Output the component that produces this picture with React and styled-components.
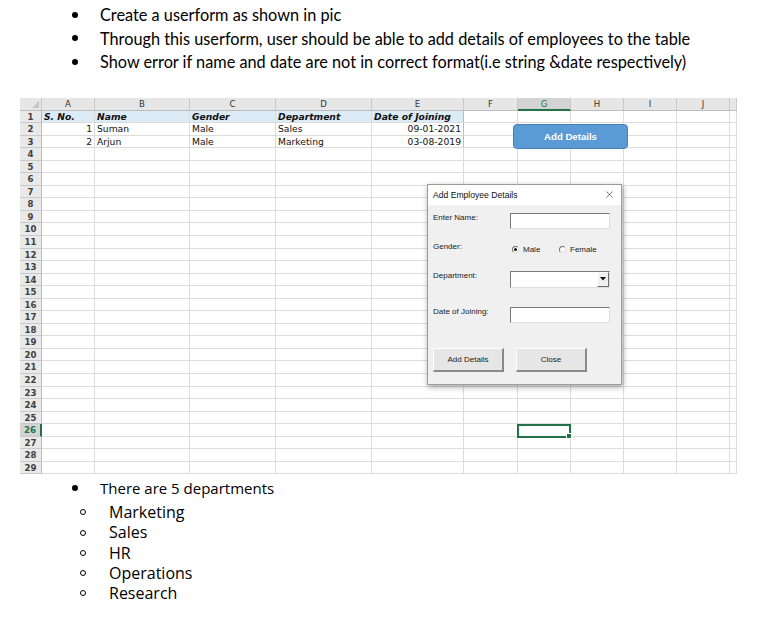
import React from 'react';
import styled, { createGlobalStyle } from 'styled-components';
import { X } from 'lucide-react';

const GlobalStyle = createGlobalStyle`
  html, body { margin: 0; padding: 0; background: #fff; }
  body { font-family: 'Lato', 'Liberation Sans', sans-serif; color: #000; }
`;

// column widths of the worksheet, first one is the row header
const COLS = [
  { id: '', w: 22 },
  { id: 'A', w: 53 },
  { id: 'B', w: 95 },
  { id: 'C', w: 86 },
  { id: 'D', w: 96 },
  { id: 'E', w: 92 },
  { id: 'F', w: 54 },
  { id: 'G', w: 53 },
  { id: 'H', w: 53 },
  { id: 'I', w: 53 },
  { id: 'J', w: 53 },
  { id: '', w: 7 },
];

const DATA = {
  1: { A: 'S. No.', B: 'Name', C: 'Gender', D: 'Department', E: 'Date of Joining' },
  2: { A: '1', B: 'Suman', C: 'Male', D: 'Sales', E: '09-01-2021' },
  3: { A: '2', B: 'Arjun', C: 'Male', D: 'Marketing', E: '03-08-2019' },
};
const RIGHT = ['A', 'E'];
const ACTIVE_COL = 'G';
const ACTIVE_ROW = 26;
const ROW_COUNT = 29;

const tasks = [
  'Create a userform as shown in pic',
  'Through this userform, user should be able to add details of employees to the table',
  'Show error if name and date are not in correct format(i.e string &date respectively)',
];
const departments = ['Marketing', 'Sales', 'HR', 'Operations', 'Research'];

const Page = styled.div`
  width: 784px;
  height: 635px;
  overflow: hidden;
  padding-top: 3px;
  box-sizing: border-box;
`;

const List = styled.ul`
  list-style: none;
  margin: 0;
  padding: 0;
`;

const Item = styled.li`
  display: flex;
  align-items: center;
  padding-left: ${p => p.$indent}px;
  font-family: ${p => p.$font};
  font-size: ${p => p.$size}px;
  line-height: ${p => p.$lh}px;
`;

const Marker = styled.span`
  flex: none;
  width: ${p => p.$w}px;
  display: flex;
  align-items: center;
`;

const Dot = styled.span`
  width: 6px;
  height: 6px;
  border-radius: 50%;
  background: ${p => (p.$hollow ? 'transparent' : '#000')};
  border: ${p => (p.$hollow ? '1px solid #000' : 'none')};
  box-sizing: border-box;
`;

const Sheet = styled.div`
  position: relative;
  margin: 24px 0 0 20px;
  width: 717px;
  font-family: 'DejaVu Sans', Verdana, sans-serif;
  font-size: 9.2px;
  color: #111;
`;

const Grid = styled.div`
  display: grid;
  grid-template-columns: ${COLS.map(c => c.w + 'px').join(' ')};
  grid-template-rows: 13px;
  grid-auto-rows: 12.55px;
`;

const Corner = styled.div`
  position: relative;
  background: #e6e6e6;
  border-right: 1px solid #c6c6c6;
  border-bottom: 1px solid #bdbdbd;
  box-sizing: border-box;
  &::after {
    content: '';
    position: absolute;
    right: 2px;
    bottom: 2px;
    border-left: 7px solid transparent;
    border-bottom: 7px solid #c4c4c4;
  }
`;

const ColHead = styled.div`
  box-sizing: border-box;
  background: ${p => (p.$active ? '#d3d3d3' : '#e6e6e6')};
  border-right: 1px solid #c8c8c8;
  border-bottom: ${p => (p.$active ? '2px solid #217346' : '1px solid #bdbdbd')};
  text-align: center;
  line-height: 12px;
  font-size: 8.6px;
  color: ${p => (p.$active ? '#217346' : '#333')};
`;

const RowHead = styled.div`
  box-sizing: border-box;
  background: ${p => (p.$active ? '#d3d3d3' : '#e9e9e9')};
  border-right: ${p => (p.$active ? '2px solid #217346' : '1px solid #bdbdbd')};
  border-bottom: 1px solid #cacaca;
  text-align: center;
  line-height: 12px;
  font-size: 8.6px;
  font-weight: 600;
  color: ${p => (p.$active ? '#217346' : '#404040')};
`;

const Cell = styled.div`
  box-sizing: border-box;
  border-right: 1px solid ${p => (p.$edge ? '#bcbcbc' : '#dcdcdc')};
  border-bottom: 1px solid #dcdcdc;
  background: ${p => (p.$head ? '#ddebf7' : '#fff')};
  font-weight: ${p => (p.$head ? 700 : 400)};
  font-style: ${p => (p.$head ? 'italic' : 'normal')};
  text-align: ${p => p.$align};
  padding: 0 2px;
  line-height: 11.5px;
  white-space: nowrap;
  overflow: hidden;
`;

const MacroButton = styled.button`
  position: absolute;
  left: 493px;
  top: 26px;
  width: 115px;
  height: 25px;
  border: 1px solid #4a7fb5;
  border-radius: 4px;
  background: #5b9bd5;
  color: #fff;
  font-family: 'Liberation Sans', Arial, sans-serif;
  font-weight: 700;
  font-size: 9.6px;
  padding: 0;
`;

const Selection = styled.div`
  position: absolute;
  left: 497px;
  top: 326px;
  width: 54px;
  height: 14px;
  box-sizing: border-box;
  border: 2px solid #217346;
  &::after {
    content: '';
    position: absolute;
    right: -3px;
    bottom: -3px;
    width: 4px;
    height: 4px;
    background: #217346;
    border: 1px solid #fff;
  }
`;

const Dialog = styled.div`
  position: absolute;
  left: 407px;
  top: 86px;
  width: 195px;
  height: 201px;
  box-sizing: border-box;
  background: #f0f0f0;
  border: 1px solid #9c9c9c;
  box-shadow: 1px 2px 6px rgba(0, 0, 0, 0.35);
  font-family: 'Liberation Sans', Tahoma, sans-serif;
  font-size: 8px;
  color: #1a1a1a;
  display: flex;
  flex-direction: column;
`;

const TitleBar = styled.div`
  height: 20px;
  flex: none;
  background: #fff;
  display: flex;
  align-items: center;
  justify-content: space-between;
  padding: 0 6px 0 5px;
  font-size: 8.6px;
  color: #111;
`;

const Body = styled.div`
  padding: 0 0 0 5px;
`;

const FormRow = styled.div`
  display: flex;
  margin-top: ${p => p.$gap}px;
  height: ${p => p.$h}px;
`;

const Label = styled.div`
  width: 77px;
  flex: none;
  line-height: 10px;
`;

const TextBox = styled.div`
  width: 100px;
  height: 100%;
  box-sizing: border-box;
  background: #fff;
  border-top: 1px solid #7a7a7a;
  border-left: 1px solid #7a7a7a;
  border-right: 1px solid #dedede;
  border-bottom: 1px solid #dedede;
  display: flex;
  justify-content: flex-end;
`;

const DropButton = styled.div`
  width: 12px;
  height: 100%;
  box-sizing: border-box;
  background: #f0f0f0;
  border-top: 1px solid #fff;
  border-left: 1px solid #fff;
  border-right: 1px solid #6b6b6b;
  border-bottom: 1px solid #6b6b6b;
  display: flex;
  align-items: center;
  justify-content: center;
`;

const RadioGroup = styled.div`
  display: flex;
  align-items: center;
  padding-left: 2px;
`;

const RadioOption = styled.label`
  display: flex;
  align-items: center;
  gap: 4px;
  width: ${p => p.$w}px;
`;

const RadioCircle = styled.span`
  width: 7px;
  height: 7px;
  box-sizing: border-box;
  border-radius: 50%;
  border: 1px solid #6d6d6d;
  border-right-color: #e0e0e0;
  border-bottom-color: #e0e0e0;
  background: #fff;
  display: flex;
  align-items: center;
  justify-content: center;
  &::after {
    content: '';
    width: 3px;
    height: 3px;
    border-radius: 50%;
    background: ${p => (p.$checked ? '#111' : 'transparent')};
  }
`;

const ButtonRow = styled.div`
  display: flex;
  gap: 12px;
  margin-top: 25px;
`;

const FormButton = styled.button`
  width: 71px;
  height: 24px;
  box-sizing: border-box;
  background: #e6e6e6;
  border-top: 1px solid #fff;
  border-left: 1px solid #fff;
  border-right: 2px solid #8a8a8a;
  border-bottom: 2px solid #8a8a8a;
  font-family: 'Liberation Sans', Tahoma, sans-serif;
  font-size: 8px;
  color: #1a1a1a;
  padding: 0;
`;

function Worksheet() {
  const rows = [];
  for (let r = 1; r <= ROW_COUNT; r++) rows.push(r);

  return (
    <Sheet>
      <Grid>
        <Corner />
        {COLS.slice(1).map((c, i) => (
          <ColHead key={'h' + i} $active={c.id === ACTIVE_COL}>{c.id}</ColHead>
        ))}
        {rows.map(r => (
          <React.Fragment key={r}>
            <RowHead $active={r === ACTIVE_ROW}>{r}</RowHead>
            {COLS.slice(1).map((c, i) => {
              const value = DATA[r] && DATA[r][c.id];
              const head = r === 1 && !!value;
              return (
                <Cell
                  key={r + '-' + i}
                  $head={head}
                  $edge={r <= 3 && c.id === 'E'}
                  $align={!head && RIGHT.includes(c.id) ? 'right' : 'left'}
                >
                  {value}
                </Cell>
              );
            })}
          </React.Fragment>
        ))}
      </Grid>

      <MacroButton>Add Details</MacroButton>
      <Selection />

      <Dialog>
        <TitleBar>
          <span>Add Employee Details</span>
          <X size={11} strokeWidth={1.3} color="#222" />
        </TitleBar>
        <Body>
          <FormRow $gap={8} $h={16}>
            <Label>Enter Name:</Label>
            <TextBox />
          </FormRow>
          <FormRow $gap={13} $h={16}>
            <Label>Gender:</Label>
            <RadioGroup>
              <RadioOption $w={47}><RadioCircle $checked />Male</RadioOption>
              <RadioOption $w={50}><RadioCircle />Female</RadioOption>
            </RadioGroup>
          </FormRow>
          <FormRow $gap={13} $h={17}>
            <Label>Department:</Label>
            <TextBox>
              <DropButton>
                <svg width="6" height="4" viewBox="0 0 6 4">
                  <polygon points="0,0 6,0 3,3.5" fill="#111" />
                </svg>
              </DropButton>
            </TextBox>
          </FormRow>
          <FormRow $gap={19} $h={16}>
            <Label>Date of Joining:</Label>
            <TextBox />
          </FormRow>
          <ButtonRow>
            <FormButton>Add Details</FormButton>
            <FormButton>Close</FormButton>
          </ButtonRow>
        </Body>
      </Dialog>
    </Sheet>
  );
}

export default function App() {
  return (
    <Page>
      <GlobalStyle />
      <List>
        {tasks.map(t => (
          <Item key={t} $indent={72} $font="'Lato', 'Liberation Sans', sans-serif" $size={16.3} $lh={23.5}>
            <Marker $w={28}><Dot /></Marker>
            {t}
          </Item>
        ))}
      </List>

      <Worksheet />

      <List>
        <Item $indent={72} $font="'Open Sans', 'Noto Sans', sans-serif" $size={15} $lh={28}>
          <Marker $w={28}><Dot /></Marker>
          There are 5 departments
        </Item>
        {departments.map(d => (
          <Item key={d} $indent={80} $font="'Open Sans', 'Noto Sans', sans-serif" $size={16} $lh={20.1}>
            <Marker $w={29}><Dot $hollow /></Marker>
            {d}
          </Item>
        ))}
      </List>
    </Page>
  );
}
